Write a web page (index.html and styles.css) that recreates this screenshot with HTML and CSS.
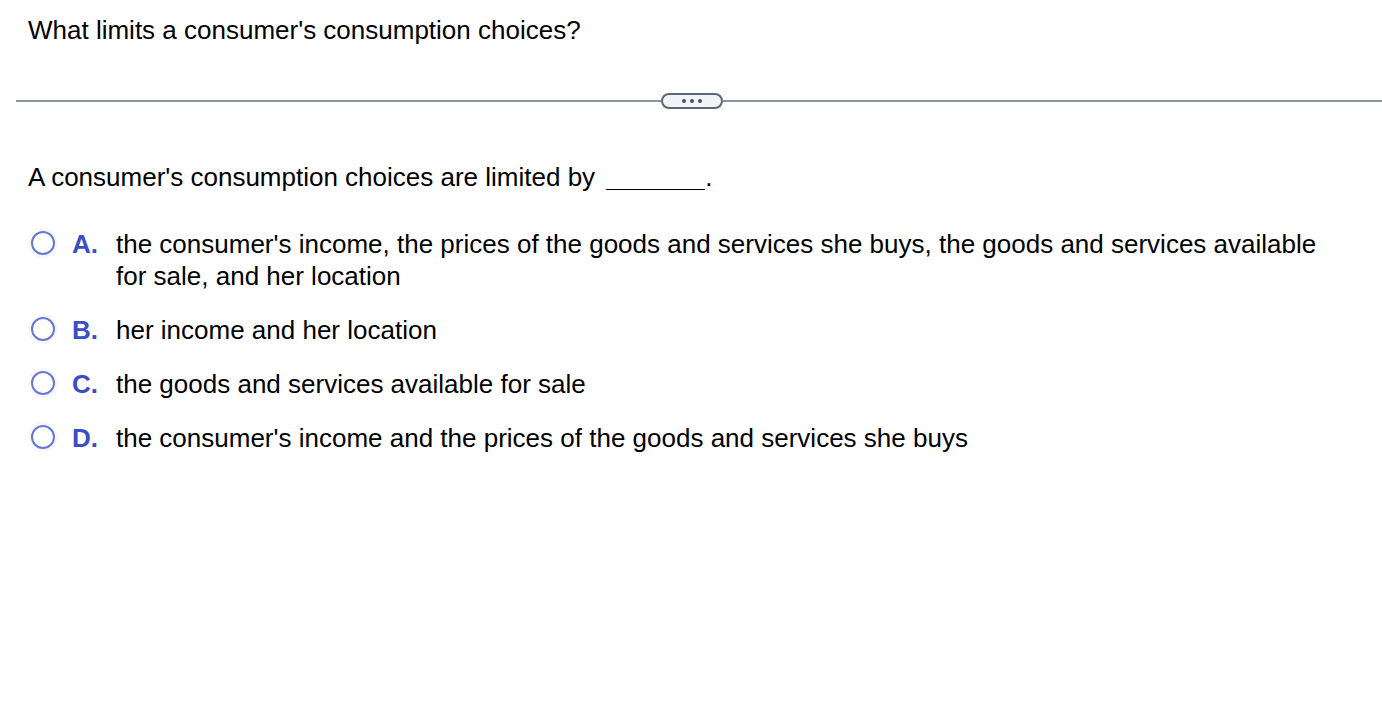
FILE: index.html
```html
<!DOCTYPE html>
<html>
<head>
<meta charset="utf-8">
<link rel="stylesheet" href="styles.css">
</head>
<body>
<div class="page">
  <div class="question">What limits a consumer's consumption choices?</div>
  <div class="divider">
    <div class="rule rule-left"></div>
    <div class="pill"><span class="dot"></span><span class="dot"></span><span class="dot"></span></div>
    <div class="rule rule-right"></div>
  </div>
  <div class="stem">A consumer's consumption choices are limited by <span class="blank"></span>.</div>
  <div class="options">
    <div class="option">
      <span class="radio"></span>
      <span class="letter">A.</span>
      <span class="text">the consumer's income, the prices of the goods and services she buys, the goods and services available for sale, and her location</span>
    </div>
    <div class="option">
      <span class="radio"></span>
      <span class="letter">B.</span>
      <span class="text">her income and her location</span>
    </div>
    <div class="option">
      <span class="radio"></span>
      <span class="letter">C.</span>
      <span class="text">the goods and services available for sale</span>
    </div>
    <div class="option">
      <span class="radio"></span>
      <span class="letter">D.</span>
      <span class="text">the consumer's income and the prices of the goods and services she buys</span>
    </div>
  </div>
</div>
</body>
</html>
```
FILE: styles.css
```css
html, body {
  margin: 0;
  padding: 0;
  background: #ffffff;
}
body {
  font-family: "Liberation Sans", Arial, Helvetica, sans-serif;
  font-size: 26px;
  line-height: 32px;
  color: #000;
}
.page {
  width: 1382px;
}
.question {
  padding: 14px 28px 0 28px;
}
.divider {
  display: flex;
  align-items: center;
  margin-top: 47px;
  margin-left: 16px;
  height: 16px;
}
.rule {
  height: 2px;
  background: #8a92a3;
}
.rule-left {
  width: 645px;
}
.rule-right {
  flex: 1;
}
.pill {
  box-sizing: border-box;
  width: 62px;
  height: 16px;
  border: 2px solid #5d6779;
  border-radius: 8px;
  background: #f1f3f6;
  display: flex;
  align-items: center;
  justify-content: center;
  gap: 4px;
}
.dot {
  width: 4px;
  height: 4px;
  border-radius: 50%;
  background: #4a5264;
}
.stem {
  margin-top: 52px;
  padding-left: 28px;
}
.blank {
  display: inline-block;
  width: 99px;
  height: 26px;
  margin-left: 4px;
  border-bottom: 1.5px solid #000;
  vertical-align: -4px;
  box-sizing: border-box;
}
.options {
  margin-top: 35px;
  padding-left: 31px;
  display: flex;
  flex-direction: column;
  gap: 22px;
}
.option {
  display: flex;
  align-items: flex-start;
}
.radio {
  flex: none;
  box-sizing: border-box;
  width: 24px;
  height: 24px;
  margin-top: 3px;
  border: 2.5px solid #6678d4;
  border-radius: 50%;
  box-shadow: 0 0 0 3px #f7f8fc;
}
.letter {
  flex: none;
  width: 44px;
  margin-left: 17px;
  color: #3a4fc3;
  font-weight: bold;
}
.text {
  width: 1226px;
}
```
